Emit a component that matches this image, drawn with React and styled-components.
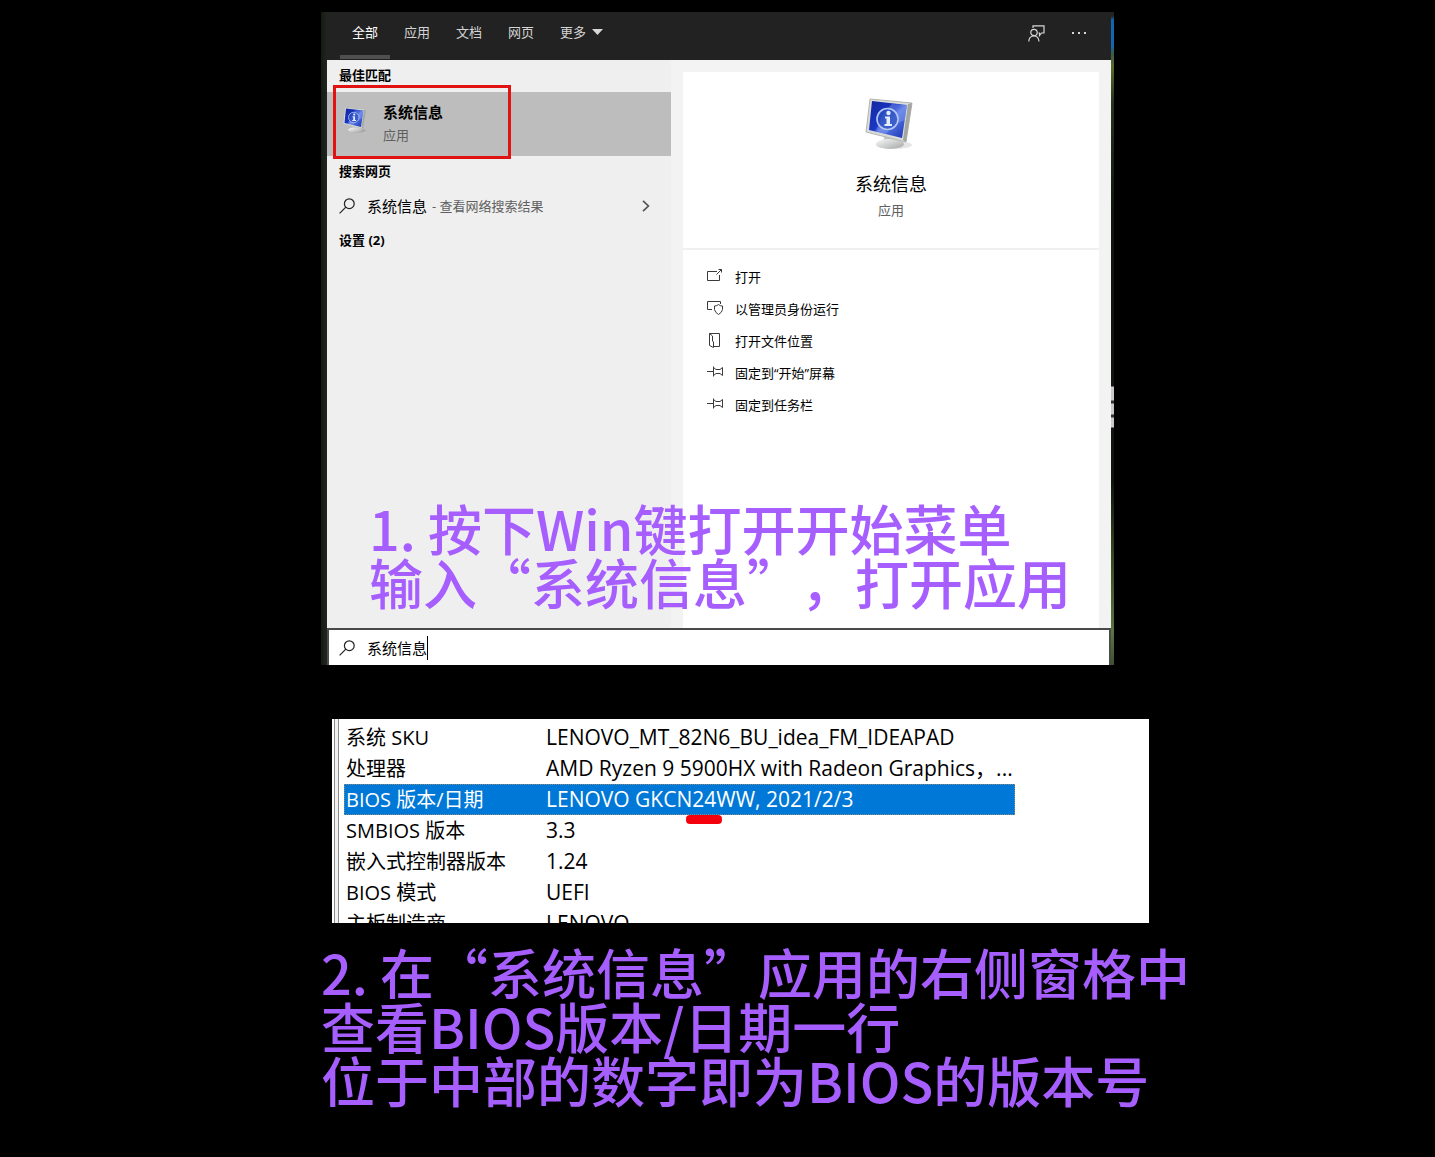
import React, { useState } from 'react';
import styled, { createGlobalStyle } from 'styled-components';

const GlobalStyle = createGlobalStyle`
  * { box-sizing: border-box; }
  body {
    margin: 0;
    background: #000;
    font-family: "Open Sans", "Noto Sans CJK SC", sans-serif;
    font-size: 13px;
    line-height: 20px;
    color: #000;
  }
  button, input {
    font: inherit;
    color: inherit;
    padding: 0;
    margin: 0;
    border: 0;
    background: none;
  }
`;

const Page = styled.main`
  display: grid;
  grid-template-columns: 321fr minmax(0, 866fr) 248fr;
  padding: 12px 0 46px;
`;

const Guide = styled.div`
  grid-column: 2;
  display: flex;
  flex-direction: column;
`;

const Caption = styled.p`
  margin: 22px 0 0;
  font-family: "Noto Sans CJK SC", sans-serif;
  font-size: 54px;
  font-weight: 500;
  line-height: 54px;
  color: #a65eff;
  white-space: nowrap;
  text-spacing-trim: space-all;
`;

const OverlayCaption = styled(Caption)`
  position: absolute;
  left: 48px;
  bottom: 56px;
  margin: 0;
`;

/* the desktop shows as a thin strip on both sides of the window */
const Desktop = styled.section`
  position: relative;
  max-width: 793px;
  display: grid;
  grid-template-columns: 6px minmax(0, 1fr) 3px;
  background: #222;
`;

const LeftStrip = styled.div`
  background: linear-gradient(90deg, #161a16, #20251d);
`;

const RightStrip = styled.div`
  background: linear-gradient(
    #222 0 4px, #1565ae 8px 34px, #3c5a4a 42px, #5a6b2c 54px, #26351c 90px,
    #10160f 200px 374px, #c9c9c9 375px 388px, #333 389px 391px,
    #c9c9c9 392px 402px, #333 403px 405px, #c9c9c9 406px 415px,
    #10160f 416px 470px, #33461f 540px, #5b7440 620px, #3d5230
  );
`;

const Window = styled.div`
  display: flex;
  flex-direction: column;
`;

const Header = styled.header`
  display: flex;
  align-items: center;
  justify-content: space-between;
  height: 48px;
  padding: 0 24px 0 13px;
  background: #222;
`;

const Tabs = styled.nav`
  display: flex;
  gap: 2px;
  height: 48px;
`;

const Tab = styled.button`
  display: flex;
  align-items: center;
  gap: 6px;
  height: 47px;
  padding: 0 12px 8px;
  border-top: 4px solid transparent;
  border-bottom: 4px solid ${(p) => (p.$active ? '#4f4f4f' : 'transparent')};
  color: ${(p) => (p.$active ? '#fff' : '#d4d4d4')};
`;

const HeaderActions = styled.div`
  display: flex;
  align-items: center;
  gap: 26px;
  padding-bottom: 6px;
`;

const IconButton = styled.button`
  display: flex;
  color: #d8d8d8;
`;

const Body = styled.div`
  display: grid;
  grid-template-columns: 344px minmax(0, 1fr);
  min-height: 568px;
`;

const Results = styled.div`
  background: #efefef;
`;

const GroupTitle = styled.h2`
  margin: 0;
  padding: 5px 12px 7px;
  font-size: 13px;
  font-weight: 700;
  line-height: 20px;
`;

const BestMatch = styled.button`
  position: relative;
  display: flex;
  align-items: flex-start;
  gap: 14px;
  width: 100%;
  height: 64px;
  padding: 10px 15px;
  background: #bdbdbd;
  text-align: left;

  svg { margin-top: 4px; }
`;

const Highlight = styled.span`
  position: absolute;
  left: 6px;
  top: -7px;
  width: 178px;
  height: 74px;
  border: 3px solid #e01212;
`;

const ResultText = styled.span`
  display: flex;
  flex-direction: column;
  gap: 3px;
`;

const ResultName = styled.span`
  font-size: 15px;
  font-weight: ${(p) => (p.$bold ? 700 : 400)};
`;

const Muted = styled.span`
  color: #5f5f5f;
`;

const WebResult = styled.button`
  display: flex;
  align-items: center;
  width: 100%;
  height: 37px;
  padding: 0 20px 2px 12px;

  svg:last-child { margin-left: auto; }
  ${ResultName} { margin: 0 5px 0 12px; }
`;

const Detail = styled.div`
  display: flex;
  flex-direction: column;
  padding: 12px 12px 0;
  background: #f3f3f3;
`;

const Hero = styled.div`
  display: flex;
  flex-direction: column;
  align-items: center;
  height: 178px;
  padding-top: 24px;
  border-bottom: 2px solid #f0f0f0;
  background: #fff;
`;

const HeroName = styled.h1`
  margin: 22px 0 4px;
  font-size: 18px;
  font-weight: 400;
  line-height: 24px;
`;

const Actions = styled.ul`
  flex: 1;
  margin: 0;
  padding: 11px 24px;
  list-style: none;
  background: #fff;
`;

const Action = styled.button`
  display: flex;
  align-items: center;
  gap: 12px;
  height: 32px;

  svg { margin-bottom: 3px; }
`;

const SearchBar = styled.label`
  display: flex;
  align-items: center;
  height: 37px;
  padding: 0 10px;
  border: 2px solid #4a4a4a;
  border-bottom: 0;
  background: #fff;
`;

const SearchInput = styled.input`
  field-sizing: content;
  margin-left: 12px;
  font-size: 15px;
  outline: none;
`;

const Caret = styled.span`
  width: 1px;
  height: 24px;
  background: #000;
`;

const InfoPane = styled.section`
  display: flex;
  max-width: 817px;
  height: 204px;
  margin: 54px 0 0 11px;
  padding-left: 2px;
  overflow: hidden;
  background: #fff;
`;

const Splitter = styled.div`
  flex: none;
  width: 5px;
  margin-right: 5px;
  border: solid #8d8d8d;
  border-width: 0 1px;
  background: #f0f0f0;
`;

const InfoTable = styled.table`
  width: 671px;
  height: max-content;
  margin-top: 3px;
  table-layout: fixed;
  border-collapse: collapse;
  font-size: 20px;
  line-height: 31px;
  white-space: nowrap;
`;

const InfoRow = styled.tr`
  background: ${(p) => (p.$selected ? '#0078d7' : 'none')};
  color: ${(p) => (p.$selected ? '#fff' : '#000')};
  outline: ${(p) => (p.$selected ? '1px dotted #8a8a80' : 'none')};
  outline-offset: -1px;
`;

const InfoName = styled.th`
  width: 200px;
  height: 31px;
  padding: 0 0 0 2px;
  font-weight: 400;
  text-align: left;
`;

const InfoValue = styled.td`
  height: 31px;
  padding: 0 0 0 2px;
  font-size: 21px;
`;

const Marked = styled.span`
  position: relative;

  &::after {
    content: "";
    position: absolute;
    left: -6px;
    right: -6px;
    bottom: -11px;
    height: 9px;
    border-radius: 4px;
    background: #f5000c;
  }
`;

function MonitorIcon({ size }) {
  return (
    <svg width={size} height={size} viewBox="0 0 54 54" aria-hidden="true">
      <defs>
        <linearGradient id="screen" x1="0" y1="0" x2="1" y2="1">
          <stop offset="0" stopColor="#1226a0" />
          <stop offset="0.45" stopColor="#1a37c4" />
          <stop offset="0.55" stopColor="#5b7be6" />
          <stop offset="1" stopColor="#1530b4" />
        </linearGradient>
        <linearGradient id="stand" x1="0" y1="0" x2="1" y2="1">
          <stop offset="0" stopColor="#fafafa" />
          <stop offset="1" stopColor="#a3a5a5" />
        </linearGradient>
      </defs>
      <ellipse cx="30" cy="49" rx="18" ry="4" fill="#000" opacity="0.1" />
      <path d="M21 38 L33 40 L34 46 L19 46 Z" fill="#c3c5c5" />
      <ellipse cx="26" cy="48" rx="14" ry="5" fill="url(#stand)" />
      <path d="M6 3 L48 7 L42 46 L2 36 Z" fill="#d9dbd8" stroke="#b4b6b2" strokeWidth="1" />
      <path d="M48 7 L42 46 L39 44 L44 8 Z" fill="#a4a6a2" />
      <path d="M8 5 L43 9 L38 42 L5 34 Z" fill="url(#screen)" />
      <path d="M28 8 L43 9 L41 24 Q29 28 22 38 L12 35 Q18 16 28 8 Z" fill="#8ea8f2" opacity="0.4" />
      <circle cx="23.5" cy="23" r="10.5" fill="#2c50c0" fillOpacity="0.75" stroke="#b4c6f5" strokeWidth="1.6" />
      <circle cx="24.5" cy="17" r="2.2" fill="#e4ecff" />
      <path d="M21 20.5 H26 V28 H28 V30 H20.5 V28 H22.5 V22.5 H21 Z" fill="#e4ecff" />
    </svg>
  );
}

function SearchIcon() {
  return (
    <svg width="16" height="16" viewBox="0 0 16 16" fill="none" stroke="#222" strokeWidth="1.2" aria-hidden="true">
      <circle cx="10.3" cy="5.7" r="4.9" />
      <path d="M6.8 9.2 L0.6 15.4" />
    </svg>
  );
}

function ActionIcon({ children }) {
  return (
    <svg width="16" height="16" viewBox="0 0 16 16" fill="none" stroke="#3a3a3a" aria-hidden="true">
      {children}
    </svg>
  );
}

const pin = (
  <path d="M0 7.5 H6.5 M6.5 2.5 V12.5 M6.5 3.5 L9 5.5 H13 L15.5 3.5 V11.5 L13 9.5 H9 L6.5 11.5" />
);

const actions = [
  { label: '打开', icon: <path d="M10 3.5 H0.5 V12.5 H12.5 V7 M9.5 6.5 L14.5 1.5 M11.5 1.5 H14.5 V4.5" /> },
  {
    label: '以管理员身份运行',
    icon: <path d="M5 9.5 H0.5 V1.5 H13.5 V4 M11.5 4.5 Q13 6 15.5 6 V9.5 Q15 12.5 11.5 14.5 Q8 12.5 7.5 9.5 V6 Q10 6 11.5 4.5 Z" />,
  },
  {
    label: '打开文件位置',
    icon: <path d="M2.5 13.5 V1.5 H12.5 V14.5 H6 M2.5 1.5 L5.5 4 V9 L6.5 10 V15.5 L2.5 13.5" />,
  },
  { label: '固定到“开始”屏幕', icon: pin },
  { label: '固定到任务栏', icon: pin },
];

const tabs = ['全部', '应用', '文档', '网页', '更多'];

const info = [
  ['系统 SKU', 'LENOVO_MT_82N6_BU_idea_FM_IDEAPAD'],
  ['处理器', 'AMD Ryzen 9 5900HX with Radeon Graphics，...'],
  ['BIOS 版本/日期', <>LENOVO GKCN<Marked>24</Marked>WW, 2021/2/3</>],
  ['SMBIOS 版本', '3.3'],
  ['嵌入式控制器版本', '1.24'],
  ['BIOS 模式', 'UEFI'],
  ['主板制造商', 'LENOVO'],
];

function SearchWindow() {
  const [query, setQuery] = useState('系统信息');

  return (
    <Desktop>
      <LeftStrip />
      <Window>
        <Header>
          <Tabs>
            {tabs.map((tab, i) => (
              <Tab key={tab} type="button" $active={i === 0}>
                {tab}
                {tab === '更多' && (
                  <svg width="11" height="6" viewBox="0 0 11 6" aria-hidden="true">
                    <path d="M0 0 H11 L5.5 6 Z" fill="#d8d8d8" />
                  </svg>
                )}
              </Tab>
            ))}
          </Tabs>
          <HeaderActions>
            <IconButton type="button" aria-label="反馈">
              <svg width="17" height="17" viewBox="0 0 17 17" fill="none" stroke="currentColor" strokeWidth="1.2" aria-hidden="true">
                <circle cx="6" cy="7.5" r="3.2" />
                <path d="M0.8 16.5 Q1 11 6 11 Q10.5 11 11 16.5" />
                <path d="M5 3 V0.8 H16 V8 H13.5 L11.5 10.5 V8 H10.5" />
              </svg>
            </IconButton>
            <IconButton type="button" aria-label="选项">
              <svg width="16" height="4" viewBox="0 0 16 4" fill="currentColor" aria-hidden="true">
                <rect x="1" y="1" width="2" height="2" />
                <rect x="7" y="1" width="2" height="2" />
                <rect x="13" y="1" width="2" height="2" />
              </svg>
            </IconButton>
          </HeaderActions>
        </Header>
        <Body>
          <Results>
            <GroupTitle>最佳匹配</GroupTitle>
            <BestMatch type="button">
              <MonitorIcon size={27} />
              <ResultText>
                <ResultName $bold>系统信息</ResultName>
                <Muted>应用</Muted>
              </ResultText>
              <Highlight />
            </BestMatch>
            <GroupTitle>搜索网页</GroupTitle>
            <WebResult type="button">
              <SearchIcon />
              <ResultName>系统信息</ResultName>
              <Muted>- 查看网络搜索结果</Muted>
              <svg width="10" height="12" viewBox="0 0 10 12" fill="none" stroke="#555" strokeWidth="1.7" aria-hidden="true">
                <path d="M2 0.8 L7.4 6 L2 11.2" />
              </svg>
            </WebResult>
            <GroupTitle>设置 (2)</GroupTitle>
          </Results>
          <Detail>
            <Hero>
              <MonitorIcon size={54} />
              <HeroName>系统信息</HeroName>
              <Muted>应用</Muted>
            </Hero>
            <Actions>
              {actions.map(({ label, icon }) => (
                <li key={label}>
                  <Action type="button">
                    <ActionIcon>{icon}</ActionIcon>
                    {label}
                  </Action>
                </li>
              ))}
            </Actions>
          </Detail>
        </Body>
        <SearchBar>
          <SearchIcon />
          <SearchInput
            type="text"
            aria-label="搜索"
            value={query}
            onChange={(e) => setQuery(e.target.value)}
          />
          <Caret />
        </SearchBar>
      </Window>
      <RightStrip />
      <OverlayCaption>
        1. 按下Win键打开开始菜单
        <br />
        输入“系统信息”，打开应用
      </OverlayCaption>
    </Desktop>
  );
}

function SystemInfo() {
  return (
    <InfoPane>
      <Splitter />
      <InfoTable>
        <tbody>
          {info.map(([name, value], i) => (
            <InfoRow key={name} $selected={i === 2}>
              <InfoName scope="row">{name}</InfoName>
              <InfoValue>{value}</InfoValue>
            </InfoRow>
          ))}
        </tbody>
      </InfoTable>
    </InfoPane>
  );
}

export default function App() {
  return (
    <Page lang="zh-CN">
      <GlobalStyle />
      <Guide>
        <SearchWindow />
        <SystemInfo />
        <Caption>
          2. 在“系统信息”应用的右侧窗格中
          <br />
          查看BIOS版本/日期一行
          <br />
          位于中部的数字即为BIOS的版本号
        </Caption>
      </Guide>
    </Page>
  );
}
